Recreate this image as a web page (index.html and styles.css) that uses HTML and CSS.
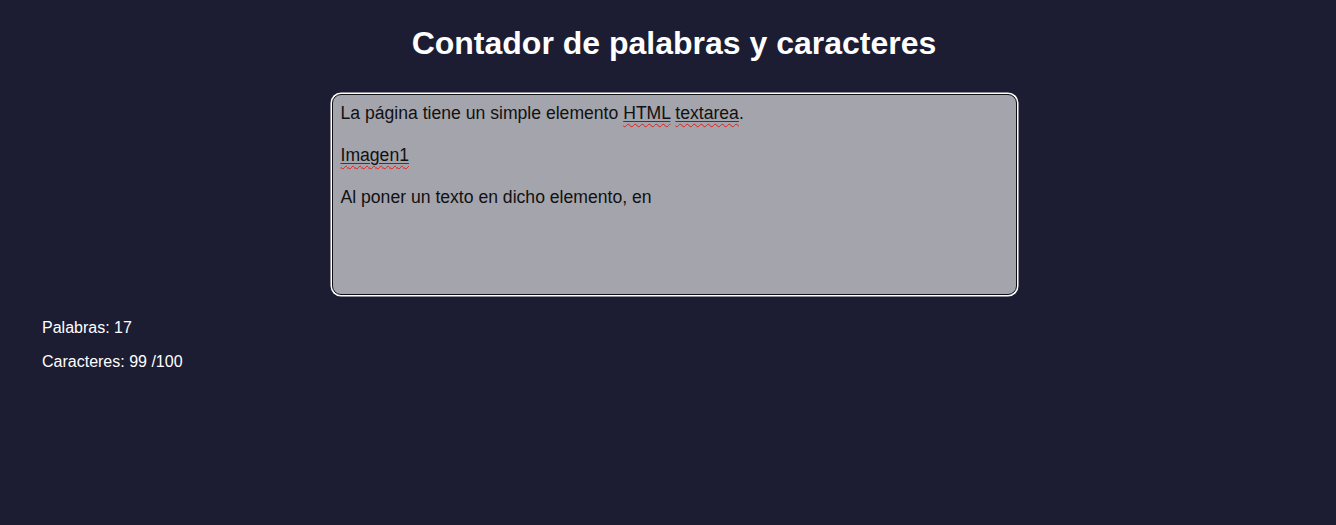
FILE: index.html
```html
<!DOCTYPE html>
<html lang="es">
<head>
<meta charset="utf-8">
<title>Contador de palabras y caracteres</title>
<link rel="stylesheet" href="styles.css">
</head>
<body>
<main class="app">
  <h1 class="title">Contador de palabras y caracteres</h1>
  <div class="editor-wrap">
    <div class="editor">
      <p class="line">La página tiene un simple elemento <span class="link"><span class="spell">HTML</span></span> <span class="link"><span class="spell">textarea</span></span>.</p>
      <p class="line"><span class="link"><span class="spell">Imagen1</span></span></p>
      <p class="line">Al poner un texto en dicho elemento, en</p>
    </div>
  </div>
  <section class="stats">
    <p class="stat">Palabras: 17</p>
    <p class="stat">Caracteres: 99 /100</p>
  </section>
</main>
</body>
</html>
```
FILE: styles.css
```css
html, body {
  margin: 0;
  padding: 0;
  background: #1c1c33;
}
body {
  font-family: "Liberation Sans", Arial, sans-serif;
  color: #ffffff;
}
.title {
  margin: 0;
  padding-top: 25px;
  padding-left: 12px;
  font-size: 32px;
  font-weight: bold;
  text-align: center;
  line-height: 37px;
}
.editor-wrap {
  display: flex;
  justify-content: center;
  padding-left: 12px;
  margin-top: 32px;
}
.editor {
  box-sizing: border-box;
  width: 685px;
  height: 201px;
  background: #a4a4ad;
  border: 1px solid #0e0e14;
  border-radius: 9px;
  box-shadow: 0 0 0 1.5px #ffffff;
  padding: 8px 8px 6px;
  color: #111111;
  font-size: 17.6px;
  line-height: 21px;
}
.line {
  margin: 0 0 21px 0;
}
.link {
  text-decoration: underline solid #3a3a40;
  text-decoration-thickness: 1px;
  text-underline-offset: 2px;
}
.spell {
  text-decoration: underline wavy #e0201c;
  text-decoration-thickness: 1px;
  text-underline-offset: 4px;
}
.stats {
  padding-left: 42px;
  margin-top: 24px;
}
.stat {
  margin: 0 0 16px 0;
  font-size: 16px;
  line-height: 18px;
}
```
